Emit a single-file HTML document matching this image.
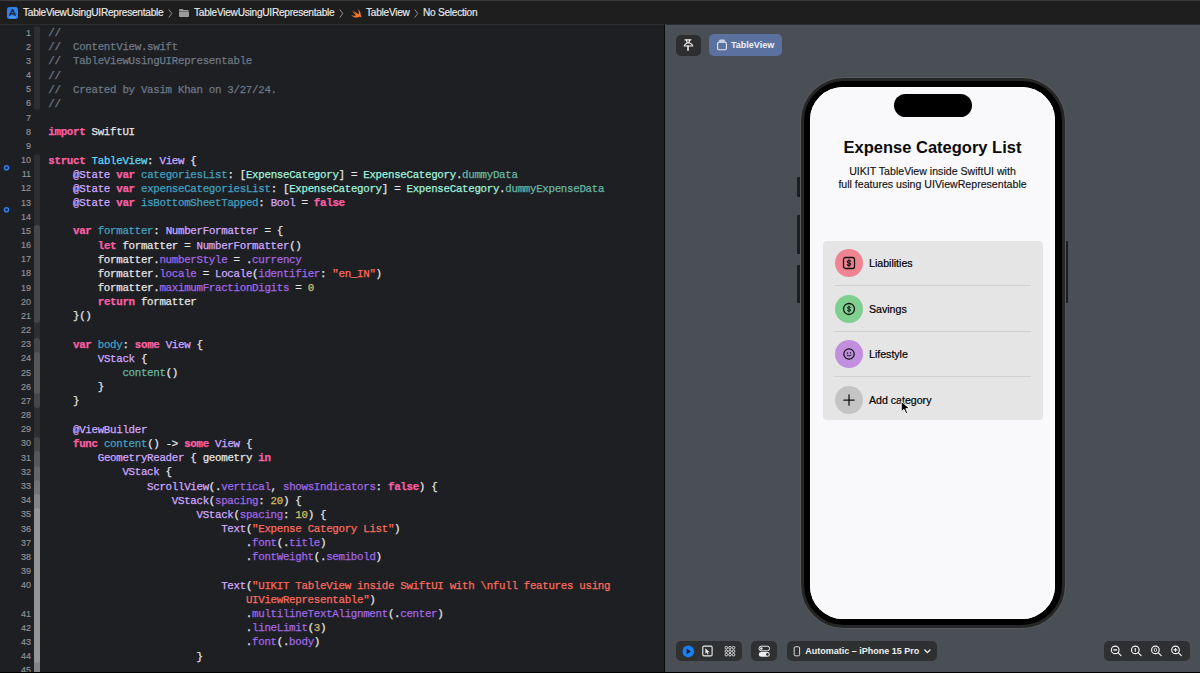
<!DOCTYPE html>
<html><head><meta charset="utf-8">
<style>
*{margin:0;padding:0;box-sizing:border-box}
html,body{width:1200px;height:673px;overflow:hidden;background:#1e1f23}
body{position:relative;font-family:"Liberation Sans",sans-serif}
.abs{position:absolute}
#hdr{left:0;top:0;width:1200px;height:25px;background:#1e1e1e;border-top:1px solid #3a3a3a;border-bottom:1.5px solid #2a2c30}
.ht{position:absolute;top:6px;font-size:10.1px;letter-spacing:-0.24px;color:#ececec;line-height:12px;white-space:nowrap;-webkit-text-stroke:0.15px #ececec}
.chev{color:#9a9a9a;font-size:9px;-webkit-text-stroke:0}
#editor{left:0;top:25px;width:664px;height:648px;background:#1e1f23;overflow:hidden}
#divider{left:664px;top:24px;width:1px;height:649px;background:#0a0a0b}
#pstrip{left:665px;top:24px;width:1px;height:649px;background:#4a4f55}
#nums{position:absolute;left:0;top:0.5px;width:31px;text-align:right;color:#939397;-webkit-text-stroke:0.15px #939397;font-family:"Liberation Sans",sans-serif;font-size:9px;line-height:14.18px}
#code{position:absolute;left:48.3px;top:1px;color:#e4e4e6;white-space:pre;-webkit-text-stroke:0.25px currentColor}
.mono{font-family:"Liberation Mono",monospace;font-size:10.8px;letter-spacing:-0.305px;line-height:14.18px}
.ln{height:14.18px}
.k{color:#fc5fa3;font-weight:bold}
.t{color:#5dd8ff}
.d{color:#41a1c0}
.p{color:#9ef1dd}
.pf{color:#67b7a4}
.o{color:#d0a8ff}
.of{color:#a167e6}
.s{color:#fc6a5d}
.n{color:#d0bf69}
.c{color:#6c7986}
.rib{position:absolute;left:34px;width:6px;border-radius:3px}
#preview{left:666px;top:25px;width:534px;height:648px;background:#4a4f55}
.tb{border-radius:5px;background:#2f3032}
#bottombar{left:0;top:672px;width:1200px;height:1px;background:#000}
</style></head><body>
<div id="hdr" class="abs">
  <svg class="abs" style="left:7px;top:5.5px" width="11" height="12" viewBox="0 0 11 12"><rect x="0" y="0" width="11" height="12" rx="2.5" fill="#2b82f0"/><path d="M5.5 2.6L2.6 8.4M5.5 2.6L8.4 8.4M3.8 6.8h3.4" stroke="#1a2330" stroke-width="1.3" fill="none" stroke-linecap="round"/><path d="M2.5 10.2h6" stroke="#8fb8e8" stroke-width="0.7"/></svg>
  <div class="ht" style="left:23px">TableViewUsingUIRepresentable</div>
  <svg class="abs" style="left:167.5px;top:8px" width="5" height="9" viewBox="0 0 5 9"><path d="M1 0.8L3.8 4.5L1 8.2" fill="none" stroke="#9c9c9c" stroke-width="0.9" stroke-linecap="round" stroke-linejoin="round"/></svg>
  <svg class="abs" style="left:179px;top:8px" width="10" height="8" viewBox="0 0 10 8"><path d="M0 1.2q0-1.2 1.2-1.2h2.4l1 1h4.2q1.2 0 1.2 1.2v0.3h-10z" fill="#9a9a9c"/><rect x="0" y="2.8" width="10" height="5.2" rx="0.8" fill="#9a9a9c"/></svg>
  <div class="ht" style="left:194px">TableViewUsingUIRepresentable</div>
  <svg class="abs" style="left:338.5px;top:8px" width="5" height="9" viewBox="0 0 5 9"><path d="M1 0.8L3.8 4.5L1 8.2" fill="none" stroke="#9c9c9c" stroke-width="0.9" stroke-linecap="round" stroke-linejoin="round"/></svg>
  <svg class="abs" style="left:351px;top:8px" width="11" height="9" viewBox="0 0 11 9"><path d="M6.8 0.2C8.9 1.5 10 3.6 9.6 5.6C10.3 6.5 10.5 7.5 10.2 8.4C9.5 7.6 8.6 7.5 7.8 7.9C6.3 8.7 4.4 8.9 2.6 8.1C1.5 7.6 0.7 6.9 0 6.1C1.6 7 3.5 7.1 5.1 6.3C3.5 5.2 2 3.7 0.9 2.1C2.2 3.1 3.8 4.2 5.2 4.9C4 3.9 2.9 2.6 2.1 1.3C3.9 3 5.9 4.5 7.5 5.3C8.2 3.6 7.9 1.8 6.8 0.2z" fill="#f4782c"/></svg>
  <div class="ht" style="left:366px">TableView</div>
  <svg class="abs" style="left:413.5px;top:8px" width="5" height="9" viewBox="0 0 5 9"><path d="M1 0.8L3.8 4.5L1 8.2" fill="none" stroke="#9c9c9c" stroke-width="0.9" stroke-linecap="round" stroke-linejoin="round"/></svg>
  <div class="ht" style="left:423px">No Selection</div>
</div>
<div id="editor" class="abs">
  <div class="rib" style="top:1.0px;height:84.1px;background:#2d2e32"></div>
  <div class="rib" style="top:128.6px;height:571.4px;background:#2d2e32"></div>
  <div class="rib" style="top:199.5px;height:98.3px;background:#45464a"></div>
  <div class="rib" style="top:313.0px;height:69.9px;background:#45464a"></div>
  <div class="rib" style="top:327.1px;height:41.5px;background:#55565a"></div>
  <div class="rib" style="top:412.2px;height:287.8px;background:#45464a"></div>
  <div class="rib" style="top:426.4px;height:273.6px;background:#55565a"></div>
  <div class="rib" style="top:440.6px;height:259.4px;background:#646569"></div>
  <div class="rib" style="top:454.8px;height:245.2px;background:#737478"></div>
  <div class="rib" style="top:468.9px;height:231.1px;background:#828387"></div>
  <div class="rib" style="top:483.1px;height:155.0px;background:#939498"></div>
  <svg class="abs" style="left:0;top:130px" width="14" height="60" viewBox="0 130 14 60"><g fill="#101418" stroke="#2f80f8" stroke-width="1.6"><circle cx="6.5" cy="142.7" r="2"/><circle cx="6.5" cy="184.8" r="2"/></g></svg>
  <div id="nums"><div class="ln">1</div><div class="ln">2</div><div class="ln">3</div><div class="ln">4</div><div class="ln">5</div><div class="ln">6</div><div class="ln">7</div><div class="ln">8</div><div class="ln">9</div><div class="ln">10</div><div class="ln">11</div><div class="ln">12</div><div class="ln">13</div><div class="ln">14</div><div class="ln">15</div><div class="ln">16</div><div class="ln">17</div><div class="ln">18</div><div class="ln">19</div><div class="ln">20</div><div class="ln">21</div><div class="ln">22</div><div class="ln">23</div><div class="ln">24</div><div class="ln">25</div><div class="ln">26</div><div class="ln">27</div><div class="ln">28</div><div class="ln">29</div><div class="ln">30</div><div class="ln">31</div><div class="ln">32</div><div class="ln">33</div><div class="ln">34</div><div class="ln">35</div><div class="ln">36</div><div class="ln">37</div><div class="ln">38</div><div class="ln">39</div><div class="ln">40</div><div class="ln"></div><div class="ln">41</div><div class="ln">42</div><div class="ln">43</div><div class="ln">44</div><div class="ln">45</div></div>
  <div id="code" class="mono"><div class="ln"><span class="c">//</span></div><div class="ln"><span class="c">//  ContentView.swift</span></div><div class="ln"><span class="c">//  TableViewUsingUIRepresentable</span></div><div class="ln"><span class="c">//</span></div><div class="ln"><span class="c">//  Created by Vasim Khan on 3/27/24.</span></div><div class="ln"><span class="c">//</span></div><div class="ln"></div><div class="ln"><span class="k">import</span> SwiftUI</div><div class="ln"></div><div class="ln"><span class="k">struct</span> <span class="t">TableView</span>: <span class="o">View</span> {</div><div class="ln">    <span class="o">@State</span> <span class="k">var</span> <span class="d">categoriesList</span>: [<span class="p">ExpenseCategory</span>] = <span class="p">ExpenseCategory</span>.<span class="pf">dummyData</span></div><div class="ln">    <span class="o">@State</span> <span class="k">var</span> <span class="d">expenseCategoriesList</span>: [<span class="p">ExpenseCategory</span>] = <span class="p">ExpenseCategory</span>.<span class="pf">dummyExpenseData</span></div><div class="ln">    <span class="o">@State</span> <span class="k">var</span> <span class="d">isBottomSheetTapped</span>: <span class="o">Bool</span> = <span class="k">false</span></div><div class="ln"></div><div class="ln">    <span class="k">var</span> <span class="d">formatter</span>: <span class="o">NumberFormatter</span> = {</div><div class="ln">        <span class="k">let</span> formatter = <span class="o">NumberFormatter</span>()</div><div class="ln">        formatter.<span class="of">numberStyle</span> = .<span class="of">currency</span></div><div class="ln">        formatter.<span class="of">locale</span> = <span class="o">Locale</span>(<span class="of">identifier</span>: <span class="s">&quot;en_IN&quot;</span>)</div><div class="ln">        formatter.<span class="of">maximumFractionDigits</span> = <span class="n">0</span></div><div class="ln">        <span class="k">return</span> formatter</div><div class="ln">    }()</div><div class="ln"></div><div class="ln">    <span class="k">var</span> <span class="d">body</span>: <span class="k">some</span> <span class="o">View</span> {</div><div class="ln">        <span class="o">VStack</span> {</div><div class="ln">            <span class="pf">content</span>()</div><div class="ln">        }</div><div class="ln">    }</div><div class="ln"></div><div class="ln">    <span class="o">@ViewBuilder</span></div><div class="ln">    <span class="k">func</span> <span class="d">content</span>() -&gt; <span class="k">some</span> <span class="o">View</span> {</div><div class="ln">        <span class="o">GeometryReader</span> { geometry <span class="k">in</span></div><div class="ln">            <span class="o">VStack</span> {</div><div class="ln">                <span class="o">ScrollView</span>(.<span class="of">vertical</span>, <span class="of">showsIndicators</span>: <span class="k">false</span>) {</div><div class="ln">                    <span class="o">VStack</span>(<span class="of">spacing</span>: <span class="n">20</span>) {</div><div class="ln">                        <span class="o">VStack</span>(<span class="of">spacing</span>: <span class="n">10</span>) {</div><div class="ln">                            <span class="o">Text</span>(<span class="s">&quot;Expense Category List&quot;</span>)</div><div class="ln">                                .<span class="of">font</span>(.<span class="of">title</span>)</div><div class="ln">                                .<span class="of">fontWeight</span>(.<span class="of">semibold</span>)</div><div class="ln"></div><div class="ln">                            <span class="o">Text</span>(<span class="s">&quot;UIKIT TableView inside SwiftUI with \nfull features using</span></div><div class="ln">                                <span class="s">UIViewRepresentable&quot;</span>)</div><div class="ln">                                .<span class="of">multilineTextAlignment</span>(.<span class="of">center</span>)</div><div class="ln">                                .<span class="of">lineLimit</span>(<span class="n">3</span>)</div><div class="ln">                                .<span class="of">font</span>(.<span class="of">body</span>)</div><div class="ln">                        }</div><div class="ln"></div></div>
</div>
<div id="divider" class="abs"></div><div id="pstrip" class="abs"></div>
<div id="preview" class="abs">
  <!-- pin button -->
  <div class="abs" style="left:10px;top:10px;width:25px;height:21px;border-radius:5px;background:#2e2e30"></div>
  <svg class="abs" style="left:16px;top:13px" width="13" height="14" viewBox="0 0 13 14"><path d="M3 1.8h6M4.3 1.8l0.9 3.2M7.7 1.8l-0.9 3.2M5.2 5q-2.6 1-2.9 3h8.4q-0.3-2-2.9-3z" fill="none" stroke="#f4f4f4" stroke-width="1.2" stroke-linejoin="round" stroke-linecap="round"/><path d="M6 8v4.3" stroke="#f4f4f4" stroke-width="1.5" stroke-linecap="round"/></svg>
  <!-- TableView button -->
  <div class="abs" style="left:43px;top:9px;width:73px;height:22px;border-radius:5px;background:#5b71a0"></div>
  <svg class="abs" style="left:50px;top:13px" width="12" height="13" viewBox="0 0 12 13"><path d="M1.6 5.5v4.9q0 1.4 1.4 1.4h6q1.4 0 1.4-1.4v-4.9q0-1.3-1.3-1.3h-6.2q-1.3 0-1.3 1.3z" fill="none" stroke="#e8ecf3" stroke-width="1.1"/><path d="M2.4 4.4l0.8-2.2q0.3-0.6 1-0.6h3.6q0.7 0 1 0.6l0.8 2.2z" fill="#c9d2e2"/></svg>
  <div class="abs" style="left:65px;top:14px;font-size:9px;font-weight:bold;color:#eef1f6;line-height:12px;white-space:nowrap">TableView</div>
  <!-- side buttons -->
  <div class="abs" style="left:131px;top:152px;width:3.5px;height:20px;border-radius:1px;background:#1c1d1f"></div>
  <div class="abs" style="left:131px;top:190px;width:3.5px;height:39px;border-radius:1px;background:#1c1d1f"></div>
  <div class="abs" style="left:131px;top:240px;width:3.5px;height:38px;border-radius:1px;background:#1c1d1f"></div>
  <div class="abs" style="left:398px;top:216px;width:4px;height:62px;border-radius:1px;background:#1c1d1f"></div>
  <!-- phone -->
  <div class="abs" style="left:135px;top:53px;width:264px;height:550px;border-radius:43px;background:#000;border:3px solid #262627;box-shadow:0 0 0 1px #58595b"></div>
  <div id="screen" class="abs" style="left:144px;top:62px;width:245px;height:532px;border-radius:33px;background:#f9f9fb;overflow:hidden;box-shadow:inset 0 0 0 1px #ffffff">
    <div class="abs" style="left:84px;top:7px;width:78px;height:23px;border-radius:12px;background:#000"></div>
    <div class="abs" style="left:0;top:50.2px;width:245px;text-align:center;font-size:16.5px;font-weight:bold;color:#0a0a0a;line-height:20px">Expense Category List</div>
    <div class="abs" style="left:0;top:77.6px;width:245px;text-align:center;font-size:10.6px;color:#111;line-height:13.6px;-webkit-text-stroke:0.15px #111">UIKIT TableView inside SwiftUI with<br>full features using UIViewRepresentable</div>
    <div class="abs" style="left:13px;top:154px;width:220px;height:179px;border-radius:4px;background:#e5e5e6"></div>
    <div class="abs" style="left:25px;top:162px;width:28px;height:28px;border-radius:14px;background:#ef8391"></div>
    <svg class="abs" style="left:31px;top:168px" width="16" height="16" viewBox="0 0 16 16"><rect x="2.5" y="2.5" width="11" height="11" rx="2" fill="none" stroke="#111" stroke-width="1.3"/><g transform="translate(8 8) scale(0.95)"><path d="M1.9 -1.7Q1.6 -2.6 0 -2.6Q-1.9 -2.6 -1.9 -1.3Q-1.9 -0.3 0 0Q1.9 0.3 1.9 1.3Q1.9 2.6 0 2.6Q-1.7 2.6 -2 1.6M0 -3.6V3.6" fill="none" stroke="#111" stroke-width="1.1" stroke-linecap="round"/></g></svg>
    <div class="abs" style="left:59px;top:169px;font-size:10.6px;color:#000;line-height:14px;white-space:nowrap;-webkit-text-stroke:0.2px #000">Liabilities</div>
    <div class="abs" style="left:25px;top:208px;width:28px;height:28px;border-radius:14px;background:#7fcf8f"></div>
    <svg class="abs" style="left:31px;top:214px" width="16" height="16" viewBox="0 0 16 16"><circle cx="8" cy="8" r="5.5" fill="none" stroke="#111" stroke-width="1.3"/><g transform="translate(8 8) scale(0.85)"><path d="M1.9 -1.7Q1.6 -2.6 0 -2.6Q-1.9 -2.6 -1.9 -1.3Q-1.9 -0.3 0 0Q1.9 0.3 1.9 1.3Q1.9 2.6 0 2.6Q-1.7 2.6 -2 1.6M0 -3.6V3.6" fill="none" stroke="#111" stroke-width="1.1" stroke-linecap="round"/></g></svg>
    <div class="abs" style="left:59px;top:215px;font-size:10.6px;color:#000;line-height:14px;white-space:nowrap;-webkit-text-stroke:0.2px #000">Savings</div>
    <div class="abs" style="left:25px;top:253px;width:28px;height:28px;border-radius:14px;background:#c28fdf"></div>
    <svg class="abs" style="left:31px;top:259px" width="16" height="16" viewBox="0 0 16 16"><circle cx="8" cy="8" r="5.2" fill="none" stroke="#111" stroke-width="1.25"/><circle cx="6.5" cy="7" r="0.75" fill="#111"/><circle cx="9.5" cy="7" r="0.75" fill="#111"/><path d="M6 9.3q2 1.6 4 0" fill="none" stroke="#111" stroke-width="0.9" stroke-linecap="round"/></svg>
    <div class="abs" style="left:59px;top:260px;font-size:10.6px;color:#000;line-height:14px;white-space:nowrap;-webkit-text-stroke:0.2px #000">Lifestyle</div>
    <div class="abs" style="left:25px;top:299px;width:28px;height:28px;border-radius:14px;background:#c4c4c4"></div>
    <svg class="abs" style="left:31px;top:305px" width="16" height="16" viewBox="0 0 16 16"><path d="M8 2.8v10.4M2.8 8h10.4" stroke="#111" stroke-width="1.25" stroke-linecap="round"/></svg>
    <div class="abs" style="left:59px;top:306px;font-size:10.6px;color:#000;line-height:14px;white-space:nowrap;-webkit-text-stroke:0.2px #000">Add category</div>
    <div class="abs" style="left:25px;top:198px;width:196px;height:1px;background:#d0d0d0"></div>
    <div class="abs" style="left:25px;top:244px;width:196px;height:1px;background:#d0d0d0"></div>
    <div class="abs" style="left:25px;top:289px;width:196px;height:1px;background:#d0d0d0"></div>
    <svg class="abs" style="left:90px;top:312.5px" width="12" height="16" viewBox="0 0 12 16"><path d="M1.2 1.2v10.8l2.8-2.6 2 4.4 1.8-0.8-1.9-4.3h3.9z" fill="#000" stroke="#fff" stroke-width="1" stroke-linejoin="round"/></svg>
  </div>
  <!-- bottom toolbar -->
  <div class="abs tb" style="left:9.7px;top:616px;width:66.5px;height:20px"></div>
  <div class="abs tb" style="left:85px;top:616px;width:26px;height:20px"></div>
  <div class="abs tb" style="left:121.3px;top:616px;width:150px;height:20px"></div>
  <div class="abs tb" style="left:437.6px;top:616px;width:86px;height:20px"></div>
  <svg class="abs" style="left:0;top:606px" width="534" height="42" viewBox="666 631 534 42">
    <circle cx="688.3" cy="651.4" r="5.8" fill="#1a80f6"/>
    <path d="M686.6 648.6v5.6l4.3-2.8z" fill="#1b1d24"/>
    <rect x="702.8" y="646.1" width="9.3" height="9.8" rx="1.2" fill="none" stroke="#eceef0" stroke-width="1.1"/>
    <path d="M705.4 648.2v5.6l1.3-1.2 1 1.9 0.9-0.4-0.9-1.9h1.8z" fill="#eceef0"/>
    <g fill="none" stroke="#e4e6e8" stroke-width="0.9">
      <circle cx="726.3" cy="647.7" r="1.3"/><circle cx="730" cy="647.7" r="1.3"/><circle cx="733.6" cy="647.7" r="1.3"/>
      <circle cx="726.3" cy="651.2" r="1.3"/><circle cx="730" cy="651.2" r="1.3"/><circle cx="733.6" cy="651.2" r="1.3"/>
      <circle cx="726.3" cy="654.7" r="1.3"/><circle cx="730" cy="654.7" r="1.3"/><circle cx="733.6" cy="654.7" r="1.3"/>
    </g>
    <rect x="759" y="646.2" width="10.6" height="4.6" rx="2.3" fill="none" stroke="#eceef0" stroke-width="1"/>
    <circle cx="761.4" cy="648.5" r="1.2" fill="#eceef0"/>
    <rect x="758.8" y="652" width="11" height="4.8" rx="2.4" fill="#eceef0"/>
    <circle cx="767.4" cy="654.4" r="1.3" fill="#2d2f32"/>
    <rect x="794.2" y="646.8" width="5.4" height="9" rx="1" fill="none" stroke="#d8dadc" stroke-width="1"/>
    <path d="M924.8 650l2.6 2.6 2.6-2.6" fill="none" stroke="#eef0f2" stroke-width="1.3" stroke-linecap="round" stroke-linejoin="round"/>
    <g fill="none" stroke="#f2f2f2" stroke-width="1.2" stroke-linecap="round">
      <circle cx="1115.2" cy="649.9" r="3.8"/><path d="M1118 652.7l3 3"/>
      <circle cx="1135.3" cy="649.9" r="3.8"/><path d="M1138.1 652.7l3 3"/>
      <circle cx="1155.4" cy="649.9" r="3.8"/><path d="M1158.2 652.7l3 3"/>
      <circle cx="1175.5" cy="649.9" r="3.8"/><path d="M1178.3 652.7l3 3"/>
    </g>
    <path d="M1113.4 649.9h3.6" stroke="#f2f2f2" stroke-width="1.4"/>
    <path d="M1135.3 648v3.8" stroke="#f2f2f2" stroke-width="1.1"/>
    <ellipse cx="1155.4" cy="649.9" rx="1.2" ry="1.7" fill="none" stroke="#f2f2f2" stroke-width="0.8"/>
    <path d="M1173.7 649.9h3.6M1175.5 648.1v3.6" stroke="#f2f2f2" stroke-width="1.1"/>
  </svg>
  <div class="abs" style="left:139.3px;top:619.5px;font-size:9px;font-weight:bold;color:#eef0f2;line-height:12px;white-space:nowrap">Automatic – iPhone 15 Pro</div>
</div>
<div id="bottombar" class="abs"></div>
</body></html>
